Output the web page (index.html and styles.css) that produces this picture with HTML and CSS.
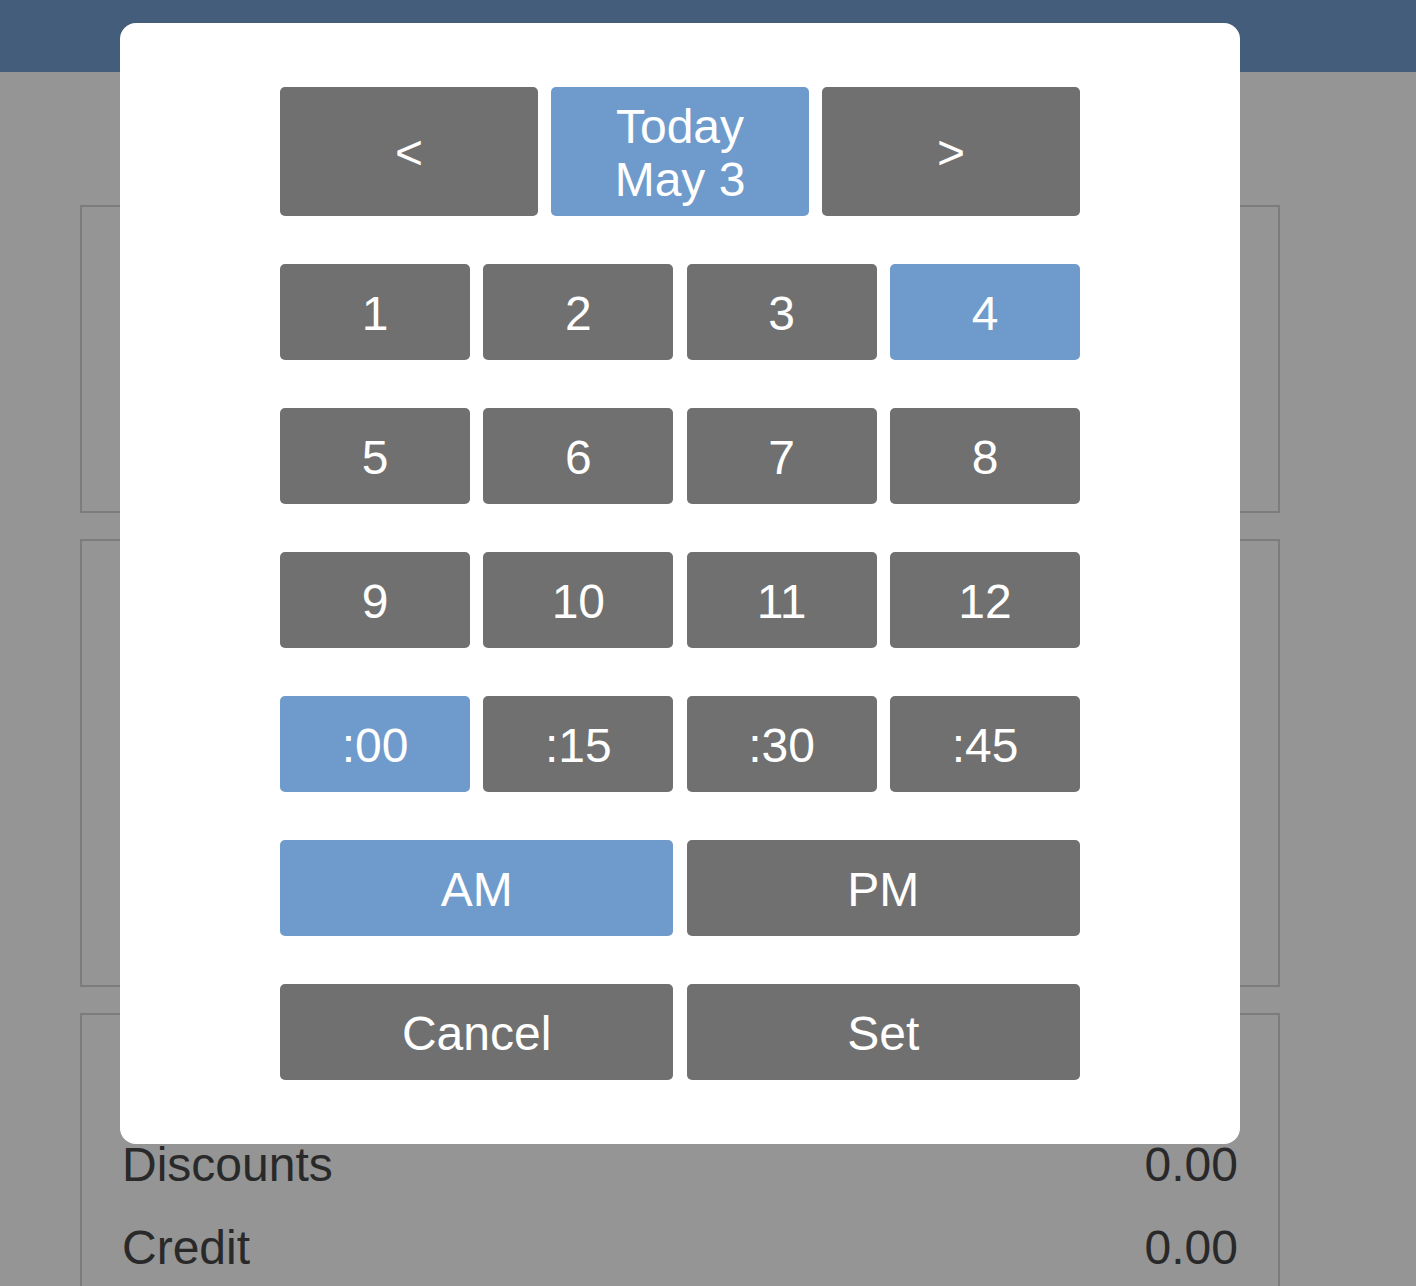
FILE: index.html
```html
<!DOCTYPE html>
<html lang="en">
<head>
    <meta charset="UTF-8">
    <meta name="viewport" content="width=device-width, initial-scale=1.0">
    <title>Order</title>
    <link rel="stylesheet" href="styles.css">
</head>
<body>
    <header class="topbar"></header>
    <div class="page">
        <section class="panel panel-first"></section>
        <section class="panel panel-second"></section>
        <section class="panel panel-totals">
            <div class="total-row">
                <span>Discounts</span>
                <span>0.00</span>
            </div>
            <div class="total-row">
                <span>Credit</span>
                <span>0.00</span>
            </div>
        </section>
    </div>

    <div class="overlay"></div>
    <div class="picker">
        <div class="picker-row cols-3 row-tall">
            <button class="btn">&lt;</button>
            <button class="btn active">Today<br>May 3</button>
            <button class="btn">&gt;</button>
        </div>
        <div class="picker-row cols-4">
            <button class="btn">1</button>
            <button class="btn">2</button>
            <button class="btn">3</button>
            <button class="btn active">4</button>
        </div>
        <div class="picker-row cols-4">
            <button class="btn">5</button>
            <button class="btn">6</button>
            <button class="btn">7</button>
            <button class="btn">8</button>
        </div>
        <div class="picker-row cols-4">
            <button class="btn">9</button>
            <button class="btn">10</button>
            <button class="btn">11</button>
            <button class="btn">12</button>
        </div>
        <div class="picker-row cols-4">
            <button class="btn active">:00</button>
            <button class="btn">:15</button>
            <button class="btn">:30</button>
            <button class="btn">:45</button>
        </div>
        <div class="picker-row cols-2">
            <button class="btn active">AM</button>
            <button class="btn">PM</button>
        </div>
        <div class="picker-row cols-2">
            <button class="btn">Cancel</button>
            <button class="btn">Set</button>
        </div>
    </div>
</body>
</html>
```

FILE: styles.css
```css
body {
    font-family: "Liberation Sans", Arial, sans-serif;
    margin: 0;
    padding: 0;
    background: #fff;
    color: #464749;
    height: 1286px;
    overflow: hidden;
}
.topbar {
    height: 72px;
    background-color: #74a0d3;
}
.page {
    width: 1360px;
    height: 1214px;
    padding-top: 133px;
    box-sizing: border-box;
    overflow: hidden;
}
.panel {
    margin: 0 80px 26px;
    border: 2px solid #d4d4d4;
    box-sizing: border-box;
}
.panel-first {
    height: 308px;
}
.panel-second {
    height: 448px;
}
.panel-totals {
    padding: 108px 40px 0;
    height: 400px;
}
.total-row {
    display: flex;
    justify-content: space-between;
    font-size: 48px;
    line-height: 83px;
}
.overlay {
    position: fixed;
    inset: 0;
    background: rgba(0, 0, 0, 0.415);
}
.picker {
    position: fixed;
    top: 23px;
    left: 120px;
    width: 1120px;
    box-sizing: border-box;
    padding: 64px 160px;
    background: #fff;
    border-radius: 16px;
    display: flex;
    flex-direction: column;
    gap: 48px;
}
.picker-row {
    display: grid;
    gap: 13.33px;
    height: 96px;
}
.row-tall {
    height: 129px;
}
.cols-2 {
    grid-template-columns: repeat(2, 1fr);
}
.cols-3 {
    grid-template-columns: repeat(3, 1fr);
}
.cols-4 {
    grid-template-columns: repeat(4, 1fr);
}
.btn {
    font-family: "Liberation Sans", Arial, sans-serif;
    font-size: 48px;
    line-height: 1.11;
    color: #fff;
    background-color: #707070;
    border: none;
    border-radius: 5px;
    padding: 3px 0 0;
    cursor: pointer;
}
.btn.active {
    background-color: #6f9bcc;
}
```
